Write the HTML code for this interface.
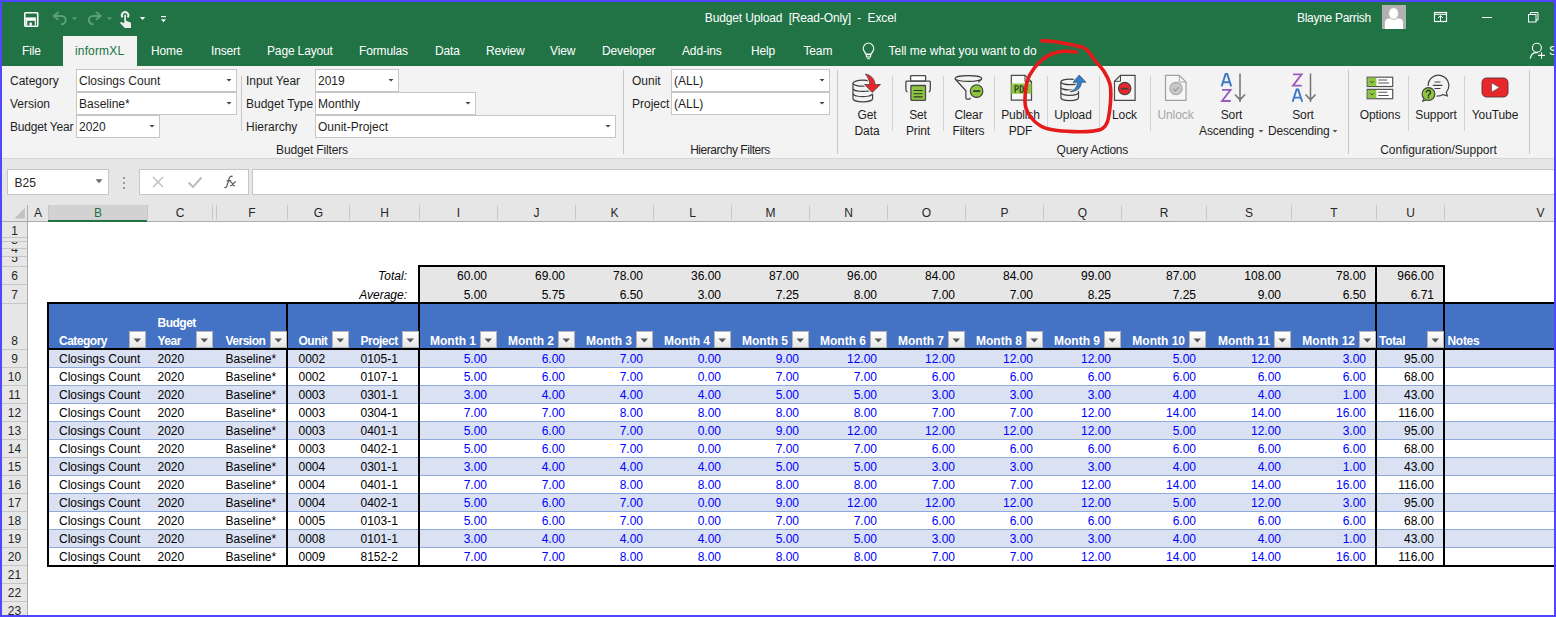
<!DOCTYPE html>
<html><head><meta charset="utf-8"><style>
html,body{margin:0;padding:0;width:1556px;height:617px;overflow:hidden;background:#fff}
body{position:relative;font-family:"Liberation Sans", sans-serif;-webkit-font-smoothing:antialiased}
body div, body svg{position:absolute;white-space:nowrap;box-sizing:content-box}
body div div{position:absolute}
</style></head><body>
<div style="left:0px;top:0px;width:1556px;height:617px;background:#ffffff;"></div>
<div style="left:2px;top:2px;width:1552px;height:64px;background:#217346;"></div>
<svg style="left:22px;top:10px;" width="18" height="18" viewBox="0 0 18 18"><rect x="2.8" y="2.8" width="12.9" height="13.4" rx="0.7" fill="none" stroke="#fff" stroke-width="1.6"/><rect x="3.6" y="7.4" width="10.3" height="3.4" fill="#fff"/><rect x="3.6" y="10.8" width="1.6" height="4.6" fill="#fff"/><rect x="12.8" y="10.8" width="1.1" height="4.6" fill="#fff"/><rect x="7.5" y="12.6" width="2.3" height="3" fill="#fff"/></svg>
<svg style="left:52px;top:10px;" width="28" height="18" viewBox="0 0 28 18"><path d="M6.5 2 L1.8 5.9 L6.5 9.8" fill="none" stroke="#5c9e7a" stroke-width="2"/><path d="M2.5 5.9 H9.5 a4.2 4.2 0 0 1 0 8.4 H9" fill="none" stroke="#5c9e7a" stroke-width="2"/><path d="M20 7.3h5l-2.5 2.6z" fill="#5c9e7a"/></svg>
<svg style="left:87px;top:10px;" width="28" height="18" viewBox="0 0 28 18"><path d="M9 2 L13.7 5.9 L9 9.8" fill="none" stroke="#5c9e7a" stroke-width="2"/><path d="M13 5.9 H6 a4.2 4.2 0 0 0 0 8.4 H6.5" fill="none" stroke="#5c9e7a" stroke-width="2"/><path d="M20 7.3h5l-2.5 2.6z" fill="#5c9e7a"/></svg>
<svg style="left:118px;top:9px;" width="30" height="20" viewBox="0 0 30 20"><path d="M4.6 8.3 A3.2 3.2 0 1 1 9.6 8.3" fill="none" stroke="#eee" stroke-width="1.9"/><path d="M6.3 5.8 h1.7 v6 l5 2 v5.2 h-6.2 l-5-5.2 l1.5-0.9 l3 1.4z" fill="#eee"/><path d="M22 7.9h5.2l-2.6 3.2z" fill="#fff"/></svg>
<svg style="left:158px;top:13px;" width="10" height="12" viewBox="0 0 10 12"><rect x="3" y="3" width="5" height="1.2" fill="#fff"/><path d="M3 6.2h5l-2.5 3z" fill="#fff"/></svg>
<div style="top:12.03px;font-size:12px;line-height:12px;color:#ffffff;left:500.5px;width:600px;text-align:center;letter-spacing:-0.15px;">Budget Upload &nbsp;[Read-Only] &nbsp;- &nbsp;Excel</div>
<div style="top:12.03px;font-size:12px;line-height:12px;color:#ffffff;left:1297px;letter-spacing:-0.3px;">Blayne Parrish</div>
<svg style="left:1382px;top:5px;" width="24" height="24" viewBox="0 0 24 24"><rect width="24" height="24" fill="#b1b1b1"/><path d="M2.9 24 V17.8 Q2.9 13.4 7.3 13.4 H16.6 Q21 13.4 21 17.8 V24z" fill="#fff"/><ellipse cx="11.6" cy="8.5" rx="5" ry="5.9" fill="#fff" stroke="#b1b1b1" stroke-width="0.9"/></svg>
<svg style="left:1432px;top:10px;" width="18" height="14" viewBox="0 0 18 14"><rect x="2.5" y="2.5" width="12" height="9" fill="none" stroke="#fff" stroke-width="1.2"/><path d="M2.5 4.3h12" stroke="#fff" stroke-width="1"/><path d="M8.5 11.5V5.8 M6 8 l2.5-2.3 l2.5 2.3" fill="none" stroke="#fff" stroke-width="1"/></svg>
<div style="left:1482px;top:17px;width:10px;height:1px;background:#ffffff;"></div>
<svg style="left:1526px;top:10px;" width="16" height="16" viewBox="0 0 16 16"><rect x="2.5" y="4.5" width="7.5" height="7.5" fill="none" stroke="#fff" stroke-width="1"/><path d="M4.5 4.5V2.5h7.5V10h-2" fill="none" stroke="#fff" stroke-width="1"/></svg>
<div style="left:63px;top:36px;width:74px;height:30px;background:#f3f3f3;"></div>
<div style="top:45.03px;font-size:12px;line-height:12px;color:#ffffff;left:22px;letter-spacing:-0.15px;">File</div>
<div style="top:45.03px;font-size:12px;line-height:12px;color:#217346;left:75px;letter-spacing:0.15px;">informXL</div>
<div style="top:45.03px;font-size:12px;line-height:12px;color:#ffffff;left:151px;letter-spacing:-0.15px;">Home</div>
<div style="top:45.03px;font-size:12px;line-height:12px;color:#ffffff;left:211px;letter-spacing:-0.15px;">Insert</div>
<div style="top:45.03px;font-size:12px;line-height:12px;color:#ffffff;left:267px;letter-spacing:-0.15px;">Page Layout</div>
<div style="top:45.03px;font-size:12px;line-height:12px;color:#ffffff;left:359px;letter-spacing:-0.15px;">Formulas</div>
<div style="top:45.03px;font-size:12px;line-height:12px;color:#ffffff;left:435px;letter-spacing:-0.15px;">Data</div>
<div style="top:45.03px;font-size:12px;line-height:12px;color:#ffffff;left:486px;letter-spacing:-0.15px;">Review</div>
<div style="top:45.03px;font-size:12px;line-height:12px;color:#ffffff;left:550px;letter-spacing:-0.15px;">View</div>
<div style="top:45.03px;font-size:12px;line-height:12px;color:#ffffff;left:602px;letter-spacing:-0.15px;">Developer</div>
<div style="top:45.03px;font-size:12px;line-height:12px;color:#ffffff;left:682px;letter-spacing:-0.15px;">Add-ins</div>
<div style="top:45.03px;font-size:12px;line-height:12px;color:#ffffff;left:751px;letter-spacing:-0.15px;">Help</div>
<div style="top:45.03px;font-size:12px;line-height:12px;color:#ffffff;left:803.5px;letter-spacing:-0.15px;">Team</div>
<svg style="left:861px;top:41px;" width="16" height="20" viewBox="0 0 16 20"><path d="M4.9 13.2 L3.4 10.6 A5.2 5.2 0 1 1 11.6 10.6 L10.1 13.2z" fill="none" stroke="#fff" stroke-width="1.2" stroke-linejoin="round"/><rect x="5.4" y="13.6" width="4.2" height="2.3" fill="none" stroke="#fff" stroke-width="1.1"/><rect x="6.2" y="17.2" width="2.8" height="1" fill="#fff"/></svg>
<div style="top:45.03px;font-size:12px;line-height:12px;color:#ffffff;left:888.5px;">Tell me what you want to do</div>
<svg style="left:1528px;top:41px;" width="18" height="18" viewBox="0 0 18 18"><circle cx="8.9" cy="6.7" r="4.5" fill="none" stroke="#fff" stroke-width="1.1"/><path d="M2.3 17.6 C2.8 13.8 5 11.8 8 11.6 H10" fill="none" stroke="#fff" stroke-width="1.1"/><path d="M13.5 11.3v6.5 M10.1 14.4h6.8" stroke="#fff" stroke-width="1.1"/></svg>
<div style="top:45.03px;font-size:12px;line-height:12px;color:#ffffff;left:1549px;">S</div>
<div style="left:2px;top:66px;width:1552px;height:92px;background:#f3f3f3;"></div>
<div style="left:2px;top:158px;width:1552px;height:1px;background:#d5d5d5;"></div>
<div style="top:75.03px;font-size:12px;line-height:12px;color:#1f1f1f;left:10px;">Category</div>
<div style="top:98.03px;font-size:12px;line-height:12px;color:#1f1f1f;left:10px;">Version</div>
<div style="top:121.03px;font-size:12px;line-height:12px;color:#1f1f1f;left:10px;letter-spacing:-0.2px;">Budget Year</div>
<div style="left:76px;top:69px;width:159px;height:21px;background:#fff;border:1px solid #c6c6c6"></div>
<svg style="left:225px;top:77px;" width="8" height="6" viewBox="0 0 8 6"><path d="M1.5 2h5l-2.5 2.6z" fill="#444"/></svg>
<div style="top:75.03px;font-size:12px;line-height:12px;color:#1f1f1f;left:79px;">Closings Count</div>
<div style="left:76px;top:92px;width:159px;height:21px;background:#fff;border:1px solid #c6c6c6"></div>
<svg style="left:225px;top:100px;" width="8" height="6" viewBox="0 0 8 6"><path d="M1.5 2h5l-2.5 2.6z" fill="#444"/></svg>
<div style="top:98.03px;font-size:12px;line-height:12px;color:#1f1f1f;left:79px;">Baseline*</div>
<div style="left:76px;top:115px;width:82px;height:21px;background:#fff;border:1px solid #c6c6c6"></div>
<svg style="left:148px;top:123px;" width="8" height="6" viewBox="0 0 8 6"><path d="M1.5 2h5l-2.5 2.6z" fill="#444"/></svg>
<div style="top:121.03px;font-size:12px;line-height:12px;color:#1f1f1f;left:79px;">2020</div>
<div style="left:241px;top:76px;width:1px;height:55px;background:#c8c8c8;"></div>
<div style="top:75.03px;font-size:12px;line-height:12px;color:#1f1f1f;left:246px;">Input Year</div>
<div style="top:98.03px;font-size:12px;line-height:12px;color:#1f1f1f;left:246px;">Budget Type</div>
<div style="top:121.03px;font-size:12px;line-height:12px;color:#1f1f1f;left:246px;">Hierarchy</div>
<div style="left:315px;top:69px;width:82px;height:21px;background:#fff;border:1px solid #c6c6c6"></div>
<svg style="left:387px;top:77px;" width="8" height="6" viewBox="0 0 8 6"><path d="M1.5 2h5l-2.5 2.6z" fill="#444"/></svg>
<div style="top:75.03px;font-size:12px;line-height:12px;color:#1f1f1f;left:318px;">2019</div>
<div style="left:315px;top:92px;width:159px;height:21px;background:#fff;border:1px solid #c6c6c6"></div>
<svg style="left:464px;top:100px;" width="8" height="6" viewBox="0 0 8 6"><path d="M1.5 2h5l-2.5 2.6z" fill="#444"/></svg>
<div style="top:98.03px;font-size:12px;line-height:12px;color:#1f1f1f;left:318px;">Monthly</div>
<div style="left:315px;top:115px;width:299px;height:21px;background:#fff;border:1px solid #c6c6c6"></div>
<svg style="left:604px;top:123px;" width="8" height="6" viewBox="0 0 8 6"><path d="M1.5 2h5l-2.5 2.6z" fill="#444"/></svg>
<div style="top:121.03px;font-size:12px;line-height:12px;color:#1f1f1f;left:318px;">Ounit-Project</div>
<div style="top:144.03px;font-size:12px;line-height:12px;color:#1f1f1f;left:12px;width:600px;text-align:center;letter-spacing:-0.15px;">Budget Filters</div>
<div style="left:623px;top:70px;width:1px;height:84px;background:#c8c8c8;"></div>
<div style="top:75.03px;font-size:12px;line-height:12px;color:#1f1f1f;left:632px;">Ounit</div>
<div style="top:98.03px;font-size:12px;line-height:12px;color:#1f1f1f;left:632px;">Project</div>
<div style="left:671px;top:69px;width:157px;height:21px;background:#fff;border:1px solid #c6c6c6"></div>
<svg style="left:818px;top:77px;" width="8" height="6" viewBox="0 0 8 6"><path d="M1.5 2h5l-2.5 2.6z" fill="#444"/></svg>
<div style="top:75.03px;font-size:12px;line-height:12px;color:#1f1f1f;left:674px;">(ALL)</div>
<div style="left:671px;top:92px;width:157px;height:21px;background:#fff;border:1px solid #c6c6c6"></div>
<svg style="left:818px;top:100px;" width="8" height="6" viewBox="0 0 8 6"><path d="M1.5 2h5l-2.5 2.6z" fill="#444"/></svg>
<div style="top:98.03px;font-size:12px;line-height:12px;color:#1f1f1f;left:674px;">(ALL)</div>
<div style="top:144.03px;font-size:12px;line-height:12px;color:#1f1f1f;left:430px;width:600px;text-align:center;letter-spacing:-0.45px;">Hierarchy Filters</div>
<div style="left:837px;top:70px;width:1px;height:84px;background:#c8c8c8;"></div>
<div style="left:892px;top:76px;width:1px;height:55px;background:#d2d2d2;"></div>
<div style="left:943px;top:76px;width:1px;height:55px;background:#d2d2d2;"></div>
<div style="left:994px;top:76px;width:1px;height:55px;background:#d2d2d2;"></div>
<div style="left:1047px;top:76px;width:1px;height:55px;background:#d2d2d2;"></div>
<div style="left:1099px;top:76px;width:1px;height:55px;background:#d2d2d2;"></div>
<div style="left:1150px;top:76px;width:1px;height:55px;background:#d2d2d2;"></div>
<div style="left:1408px;top:76px;width:1px;height:55px;background:#d2d2d2;"></div>
<div style="left:1464px;top:76px;width:1px;height:55px;background:#d2d2d2;"></div>
<div style="left:1348px;top:70px;width:1px;height:84px;background:#c8c8c8;"></div>
<div style="left:1529px;top:70px;width:1px;height:84px;background:#c8c8c8;"></div>
<div style="top:144.03px;font-size:12px;line-height:12px;color:#1f1f1f;left:792.3px;width:600px;text-align:center;letter-spacing:-0.25px;">Query Actions</div>
<div style="top:144.03px;font-size:12px;line-height:12px;color:#1f1f1f;left:1138.5px;width:600px;text-align:center;">Configuration/Support</div>
<div style="top:109.03px;font-size:12px;line-height:12px;color:#1f1f1f;left:567px;width:600px;text-align:center;letter-spacing:-0.1px;">Get</div>
<div style="top:125.03px;font-size:12px;line-height:12px;color:#1f1f1f;left:567px;width:600px;text-align:center;letter-spacing:-0.1px;">Data</div>
<div style="top:109.03px;font-size:12px;line-height:12px;color:#1f1f1f;left:618px;width:600px;text-align:center;letter-spacing:-0.1px;">Set</div>
<div style="top:125.03px;font-size:12px;line-height:12px;color:#1f1f1f;left:618px;width:600px;text-align:center;letter-spacing:-0.1px;">Print</div>
<div style="top:109.03px;font-size:12px;line-height:12px;color:#1f1f1f;left:668.5px;width:600px;text-align:center;letter-spacing:-0.1px;">Clear</div>
<div style="top:125.03px;font-size:12px;line-height:12px;color:#1f1f1f;left:668.5px;width:600px;text-align:center;letter-spacing:-0.1px;">Filters</div>
<div style="top:109.03px;font-size:12px;line-height:12px;color:#1f1f1f;left:720.5px;width:600px;text-align:center;letter-spacing:-0.1px;">Publish</div>
<div style="top:125.03px;font-size:12px;line-height:12px;color:#1f1f1f;left:720.5px;width:600px;text-align:center;letter-spacing:-0.1px;">PDF</div>
<div style="top:109.03px;font-size:12px;line-height:12px;color:#1f1f1f;left:773px;width:600px;text-align:center;letter-spacing:-0.1px;">Upload</div>
<div style="top:109.03px;font-size:12px;line-height:12px;color:#1f1f1f;left:824.5px;width:600px;text-align:center;letter-spacing:-0.1px;">Lock</div>
<div style="top:109.03px;font-size:12px;line-height:12px;color:#a6a6a6;left:875.5px;width:600px;text-align:center;letter-spacing:-0.1px;">Unlock</div>
<div style="top:109.03px;font-size:12px;line-height:12px;color:#1f1f1f;left:931.5px;width:600px;text-align:center;letter-spacing:-0.1px;">Sort</div>
<div style="top:109.03px;font-size:12px;line-height:12px;color:#1f1f1f;left:1003px;width:600px;text-align:center;letter-spacing:-0.1px;">Sort</div>
<div style="top:109.03px;font-size:12px;line-height:12px;color:#1f1f1f;left:1080px;width:600px;text-align:center;letter-spacing:-0.1px;">Options</div>
<div style="top:109.03px;font-size:12px;line-height:12px;color:#1f1f1f;left:1136px;width:600px;text-align:center;letter-spacing:-0.1px;">Support</div>
<div style="top:109.03px;font-size:12px;line-height:12px;color:#1f1f1f;left:1195px;width:600px;text-align:center;letter-spacing:-0.1px;">YouTube</div>
<div style="top:125.03px;font-size:12px;line-height:12px;color:#1f1f1f;left:1199px;letter-spacing:-0.1px;">Ascending</div>
<svg style="left:1257px;top:128px;" width="8" height="6" viewBox="0 0 8 6"><path d="M1.5 2h5l-2.5 2.6z" fill="#555"/></svg>
<div style="top:125.03px;font-size:12px;line-height:12px;color:#1f1f1f;left:1268px;letter-spacing:-0.2px;">Descending</div>
<svg style="left:1331px;top:128px;" width="8" height="6" viewBox="0 0 8 6"><path d="M1.5 2h5l-2.5 2.6z" fill="#555"/></svg>
<svg style="left:850px;top:72px;" width="34" height="32" viewBox="0 0 34 32"><g fill="#f3f3f3" stroke="#404040" stroke-width="1.2"><path d="M3.0 21.6 v5.2 a9.8 3.0 0 0 0 19.6 0 v-5.2"/><path d="M3.0 16.4 v5.2 a9.8 3.0 0 0 0 19.6 0 v-5.2"/><path d="M3.0 11.2 v5.2 a9.8 3.0 0 0 0 19.6 0 v-5.2"/><ellipse cx="12.8" cy="11.2" rx="9.8" ry="3.0"/></g>
<path d="M15.3 2 c6 1 9.5 5.5 9.8 10.5 h5.4 l-8.3 8 l-7.6-8 h5.3 c-0.3-4 -2-7.5 -4.6-10.5z" fill="none" stroke="#f3f3f3" stroke-width="2.6"/><path d="M15.3 2 c6 1 9.5 5.5 9.8 10.5 h5.4 l-8.3 8 l-7.6-8 h5.3 c-0.3-4 -2-7.5 -4.6-10.5z" fill="#e8262b" stroke="#3a3a3a" stroke-width="0.7" stroke-linejoin="round"/>
</svg>
<svg style="left:903px;top:73px;" width="30" height="30" viewBox="0 0 30 30">
<rect x="7.6" y="2.6" width="15" height="5.6" rx="0.8" fill="#fff" stroke="#4a4a4a" stroke-width="1.3"/>
<path d="M4.5 19 c-1.2-0.5 -1.6-1.3 -1.6-2.5 v-7.6 c0-0.5 0.3-0.8 0.8-0.8 h22.8 c0.5 0 0.8 0.3 0.8 0.8 v7.6 c0 1.2 -0.4 2 -1.6 2.5" fill="none" stroke="#4a4a4a" stroke-width="1.3"/>
<rect x="7.9" y="12.5" width="14.6" height="14.8" rx="0.5" fill="#8cc63f" stroke="#4a4a4a" stroke-width="1.3"/>
<path d="M10.6 17.5h9 M10.6 20.7h9 M10.6 23.9h9" stroke="#333" stroke-width="1.1"/>
</svg>
<svg style="left:953px;top:73px;" width="32" height="30" viewBox="0 0 32 30">
<path d="M2.2 6 L12.9 17.8 v7.2 c0 0.8 0.4 1.2 1.2 1.2 h2.2 c0.6 0 1-0.3 1-1.4" fill="none" stroke="#3a3a3a" stroke-width="1.2"/>
<path d="M28.8 5.7 L25.4 9.4" fill="none" stroke="#3a3a3a" stroke-width="1.2"/>
<ellipse cx="15.4" cy="5.5" rx="13.4" ry="2.9" fill="#f3f3f3" stroke="#3a3a3a" stroke-width="1.1"/>
<circle cx="23.6" cy="18.1" r="6.3" fill="#8cc63f" stroke="#3a3a3a" stroke-width="1.1"/>
<rect x="20.2" y="17.2" width="6.9" height="1.8" fill="#3a3a3a"/>
</svg>
<svg style="left:1010px;top:74px;" width="24" height="28" viewBox="0 0 24 28">
<path d="M1.3 1.3 h13.7 l6.5 6.5 v18.3 h-20.2z" fill="#f8f8f8" stroke="#4a4a4a" stroke-width="1.2"/>
<path d="M15 1.3 v6.5 h6.5" fill="none" stroke="#404040" stroke-width="1"/>
<rect x="1.3" y="9.5" width="20.2" height="10.2" fill="#8cc63f"/>
<path d="M5.2 18.7 V11.8 H6.6 a1.8 1.8 0 0 1 0 3.6 H5.2 M10.3 18.2 V11.8 H11.3 c1.6 0 2.1 1.2 2.1 3.2 s-0.5 3.2 -2.1 3.2z M15.4 18.7 V11.8 H18.2 M15.4 15.2 H17.6" fill="none" stroke="#333" stroke-width="1.1"/>
</svg>
<svg style="left:1058px;top:73px;" width="30" height="30" viewBox="0 0 30 30"><g fill="#f3f3f3" stroke="#404040" stroke-width="1.2"><path d="M2.8999999999999986 19.5 v5.3 a8.8 2.8 0 0 0 17.6 0 v-5.3"/><path d="M2.8999999999999986 14.2 v5.3 a8.8 2.8 0 0 0 17.6 0 v-5.3"/><path d="M2.8999999999999986 8.9 v5.3 a8.8 2.8 0 0 0 17.6 0 v-5.3"/><ellipse cx="11.7" cy="8.9" rx="8.8" ry="2.8"/></g>
<path d="M12 18.8 c4.5-1.5 7-4.5 7.5-9.5 h-4.5 l6.2-7.3 l6.8 7.3 h-4.5 c-0.5 6 -4.5 9.5 -11.5 9.5z" fill="none" stroke="#f3f3f3" stroke-width="2.6"/><path d="M12 18.8 c4.5-1.5 7-4.5 7.5-9.5 h-4.5 l6.2-7.3 l6.8 7.3 h-4.5 c-0.5 6 -4.5 9.5 -11.5 9.5z" fill="#2f7fd0" stroke="#3a3a3a" stroke-width="0.6" stroke-linejoin="round"/>
</svg>
<svg style="left:1113px;top:74px;" width="24" height="28" viewBox="0 0 24 28">
<path d="M7.5 1.3 h14.6 v25 h-20.6 v-19z" fill="#f6f6f6" stroke="#4a4a4a" stroke-width="1.2"/>
<path d="M7.5 1.3 v6 h-6" fill="none" stroke="#404040" stroke-width="1"/>
<circle cx="11.7" cy="14.6" r="6.2" fill="#e8262b" stroke="#404040" stroke-width="1.1"/>
<rect x="8" y="13.8" width="7.4" height="1.7" fill="#404040"/>
</svg>
<svg style="left:1164px;top:74px;" width="24" height="28" viewBox="0 0 24 28">
<path d="M1.5 1.3 h13.8 l6.7 6.7 v18.3 h-20.5z" fill="#f6f6f6" stroke="#a0a0a0" stroke-width="1.2"/>
<path d="M15.3 1.3 v6.7 h6.7" fill="none" stroke="#a8a8a8" stroke-width="1"/>
<circle cx="12" cy="14.6" r="6.2" fill="#c8c8c8" stroke="#a8a8a8" stroke-width="1.1"/>
<path d="M9.2 14.8 l2 2 l3.6-3.6" fill="none" stroke="#9a9a9a" stroke-width="1.2"/>
</svg>
<svg style="left:1219px;top:72px;" width="28" height="32" viewBox="0 0 28 32"><path d="M2.6 14.4 L6.6 2.0 h1.6 L12.2 14.4 M4.2 10.200000000000001 h6.4" fill="none" stroke="#3a78c2" stroke-width="1.9"/><path d="M3 17.8 h8.6 L3 29.0 h8.8" fill="none" stroke="#9b5bbb" stroke-width="1.8"/><path d="M21 1.5 v28.5 M16 22.5 l5 5.3 l5-5.3" fill="none" stroke="#737373" stroke-width="1.5"/></svg>
<svg style="left:1289.5px;top:72px;" width="28" height="32" viewBox="0 0 28 32"><path d="M3 2.4 h8.6 L3 13.6 h8.8" fill="none" stroke="#9b5bbb" stroke-width="1.8"/><path d="M2.6 29.8 L6.6 17.400000000000002 h1.6 L12.2 29.8 M4.2 25.6 h6.4" fill="none" stroke="#3a78c2" stroke-width="1.9"/><path d="M20.5 1.5 v28.5 M15.5 22.5 l5 5.3 l5-5.3" fill="none" stroke="#737373" stroke-width="1.5"/></svg>
<svg style="left:1366px;top:76px;" width="28" height="24" viewBox="0 0 28 24">
<rect x="1.2" y="1.2" width="25.5" height="9.3" fill="#fff" stroke="#555" stroke-width="1.2"/>
<rect x="1.8" y="1.8" width="8.6" height="8.1" fill="#8cc63f"/>
<path d="M4.3 5 l1.8 1.8 l1.8-1.8" fill="none" stroke="#404040" stroke-width="1"/>
<path d="M12.2 4h9 M12.2 7h11" stroke="#555" stroke-width="1.1"/>
<rect x="1.2" y="13.4" width="25.5" height="9.3" fill="#fff" stroke="#555" stroke-width="1.2"/>
<rect x="1.8" y="14" width="8.6" height="8.1" fill="#8cc63f"/>
<path d="M4.3 17.2 l1.8 1.8 l1.8-1.8" fill="none" stroke="#404040" stroke-width="1"/>
<path d="M12.2 16.3h9 M12.2 19.5h10.5" stroke="#555" stroke-width="1.1"/>
</svg>
<svg style="left:1420px;top:73px;" width="30" height="30" viewBox="0 0 30 30">
<path d="M8.2 13 A10.3 10.3 0 1 1 26.3 19.3 l1 3.6 l-4.2-1.3 c-1.5 1-4 1.6-6.5 1.6" fill="none" stroke="#404040" stroke-width="1.2"/>
<path d="M14.5 9h6 M12.8 12.3h9.6 M14.5 15.5h6" stroke="#404040" stroke-width="1.2"/>
<circle cx="8.5" cy="21" r="6.4" fill="#8cc63f" stroke="#404040" stroke-width="1.1"/>
<path d="M3.8 25.5 l-1.3 3 l3.3-1.3" fill="#8cc63f" stroke="#404040" stroke-width="1"/>
<path d="M6.3 19.4 a2.1 2.1 0 1 1 3.1 1.8 c-0.7 0.4 -1 0.8 -1 1.5 v0.6" fill="none" stroke="#2a2a2a" stroke-width="1.3"/>
<rect x="7.7" y="23.8" width="1.4" height="1.3" fill="#2a2a2a"/>
</svg>
<svg style="left:1481px;top:77px;" width="28" height="21" viewBox="0 0 28 21">
<rect x="1" y="1" width="26" height="19" rx="4.5" fill="#e8262b" stroke="#5a3030" stroke-width="0.9"/>
<path d="M10.5 5.8 v9.4 l8-4.7z" fill="#fff" stroke="#404040" stroke-width="0.6"/>
</svg>
<div style="left:2px;top:159px;width:1552px;height:46px;background:#e6e6e6;"></div>
<div style="left:7px;top:169px;width:100px;height:24px;background:#fff;border:1px solid #c6c6c6"></div>
<div style="top:177.03px;font-size:12px;line-height:12px;color:#262626;left:14.5px;">B25</div>
<svg style="left:94px;top:177px;" width="10" height="8" viewBox="0 0 10 8"><path d="M1.5 2.2h7l-3.5 4z" fill="#6a6a6a"/></svg>
<div style="left:123px;top:177px;width:2px;height:2px;background:#9a9a9a;"></div>
<div style="left:123px;top:182px;width:2px;height:2px;background:#9a9a9a;"></div>
<div style="left:123px;top:187px;width:2px;height:2px;background:#9a9a9a;"></div>
<div style="left:139px;top:169px;width:108px;height:24px;background:#fff;border:1px solid #c6c6c6"></div>
<svg style="left:151px;top:175px;" width="14" height="14" viewBox="0 0 14 14"><path d="M2 2 L12 12 M12 2 L2 12" stroke="#bdbdbd" stroke-width="1.4"/></svg>
<svg style="left:187px;top:175px;" width="16" height="14" viewBox="0 0 16 14"><path d="M1.5 7.5 l4.5 4.5 l8.5-9.5" fill="none" stroke="#bfbfbf" stroke-width="2.2"/></svg>
<svg style="left:223px;top:175px;" width="16" height="14" viewBox="0 0 16 14"><path d="M1.4 12.4 c1 0.5 1.9 0 2.5-1.5 L6.3 3.1 c0.5-1.5 1.6-2.2 3.3-1.6 M3.6 5.6 h4.6" fill="none" stroke="#606060" stroke-width="1.35"/><path d="M6.6 6.9 c1.5-0.3 2.3 0.5 2.8 1.8 l0.7 1.5 c0.4 0.6 1 0.6 1.7 0.3 M12.8 6.6 c-0.8 0 -1.8 1.2 -2.6 2.2 l-1.2 1.4 c-0.6 0.6 -1.2 0.6 -1.9 0.3" fill="none" stroke="#606060" stroke-width="1.2"/></svg>
<div style="left:252px;top:169px;width:1310px;height:24px;background:#fff;border:1px solid #c6c6c6"></div>
<div style="left:2px;top:205px;width:1552px;height:16px;background:#e6e6e6;"></div>
<div style="left:48px;top:205px;width:99px;height:16px;background:#d2d2d2;"></div>
<div style="left:2px;top:221px;width:1552px;height:1px;background:#ababab;"></div>
<div style="left:48px;top:220px;width:99px;height:2px;background:#217346;"></div>
<svg style="left:13px;top:207px;" width="14" height="13" viewBox="0 0 14 13"><path d="M12 1 V11.5 H1.5z" fill="#c2c2c2"/></svg>
<div style="left:48px;top:205px;width:1px;height:15px;background:#c8c8c8;"></div>
<div style="top:207.03px;font-size:12px;line-height:12px;color:#262626;left:-262.0px;width:600px;text-align:center;">A</div>
<div style="left:147px;top:205px;width:1px;height:15px;background:#c8c8c8;"></div>
<div style="top:207.03px;font-size:12px;line-height:12px;color:#217346;left:-202.0px;width:600px;text-align:center;">B</div>
<div style="left:212px;top:205px;width:1px;height:15px;background:#c8c8c8;"></div>
<div style="top:207.03px;font-size:12px;line-height:12px;color:#262626;left:-120.0px;width:600px;text-align:center;">C</div>
<div style="left:287px;top:205px;width:1px;height:15px;background:#c8c8c8;"></div>
<div style="top:207.03px;font-size:12px;line-height:12px;color:#262626;left:-48.0px;width:600px;text-align:center;">F</div>
<div style="left:349px;top:205px;width:1px;height:15px;background:#c8c8c8;"></div>
<div style="top:207.03px;font-size:12px;line-height:12px;color:#262626;left:18.5px;width:600px;text-align:center;">G</div>
<div style="left:419px;top:205px;width:1px;height:15px;background:#c8c8c8;"></div>
<div style="top:207.03px;font-size:12px;line-height:12px;color:#262626;left:84.5px;width:600px;text-align:center;">H</div>
<div style="left:497px;top:205px;width:1px;height:15px;background:#c8c8c8;"></div>
<div style="top:207.03px;font-size:12px;line-height:12px;color:#262626;left:158.5px;width:600px;text-align:center;">I</div>
<div style="left:575px;top:205px;width:1px;height:15px;background:#c8c8c8;"></div>
<div style="top:207.03px;font-size:12px;line-height:12px;color:#262626;left:236.5px;width:600px;text-align:center;">J</div>
<div style="left:653px;top:205px;width:1px;height:15px;background:#c8c8c8;"></div>
<div style="top:207.03px;font-size:12px;line-height:12px;color:#262626;left:314.5px;width:600px;text-align:center;">K</div>
<div style="left:731px;top:205px;width:1px;height:15px;background:#c8c8c8;"></div>
<div style="top:207.03px;font-size:12px;line-height:12px;color:#262626;left:392.5px;width:600px;text-align:center;">L</div>
<div style="left:809px;top:205px;width:1px;height:15px;background:#c8c8c8;"></div>
<div style="top:207.03px;font-size:12px;line-height:12px;color:#262626;left:470.5px;width:600px;text-align:center;">M</div>
<div style="left:887px;top:205px;width:1px;height:15px;background:#c8c8c8;"></div>
<div style="top:207.03px;font-size:12px;line-height:12px;color:#262626;left:548.5px;width:600px;text-align:center;">N</div>
<div style="left:965px;top:205px;width:1px;height:15px;background:#c8c8c8;"></div>
<div style="top:207.03px;font-size:12px;line-height:12px;color:#262626;left:626.5px;width:600px;text-align:center;">O</div>
<div style="left:1043px;top:205px;width:1px;height:15px;background:#c8c8c8;"></div>
<div style="top:207.03px;font-size:12px;line-height:12px;color:#262626;left:704.5px;width:600px;text-align:center;">P</div>
<div style="left:1121px;top:205px;width:1px;height:15px;background:#c8c8c8;"></div>
<div style="top:207.03px;font-size:12px;line-height:12px;color:#262626;left:782.5px;width:600px;text-align:center;">Q</div>
<div style="left:1206px;top:205px;width:1px;height:15px;background:#c8c8c8;"></div>
<div style="top:207.03px;font-size:12px;line-height:12px;color:#262626;left:864.0px;width:600px;text-align:center;">R</div>
<div style="left:1291px;top:205px;width:1px;height:15px;background:#c8c8c8;"></div>
<div style="top:207.03px;font-size:12px;line-height:12px;color:#262626;left:949.0px;width:600px;text-align:center;">S</div>
<div style="left:1376px;top:205px;width:1px;height:15px;background:#c8c8c8;"></div>
<div style="top:207.03px;font-size:12px;line-height:12px;color:#262626;left:1034.0px;width:600px;text-align:center;">T</div>
<div style="left:1444px;top:205px;width:1px;height:15px;background:#c8c8c8;"></div>
<div style="top:207.03px;font-size:12px;line-height:12px;color:#262626;left:1110.5px;width:600px;text-align:center;">U</div>
<div style="left:1636px;top:205px;width:1px;height:15px;background:#c8c8c8;"></div>
<div style="top:207.03px;font-size:12px;line-height:12px;color:#262626;left:1240.5px;width:600px;text-align:center;">V</div>
<div style="left:27px;top:205px;width:1px;height:16px;background:#ababab;"></div>
<div style="left:216px;top:205px;width:1px;height:15px;background:#c8c8c8;"></div>
<div style="left:2px;top:222px;width:25px;height:393px;background:#e6e6e6;"></div>
<div style="left:27px;top:222px;width:1px;height:393px;background:#ababab;"></div>
<div style="left:2px;top:237px;width:25px;height:1px;background:#c6c6c6;"></div>
<div style="left:2px;top:222px;width:25px;height:15px;overflow:hidden"><div style="left:0;top:3.030000000000001px;width:25px;text-align:center;font-size:12px;line-height:12px;color:#262626">1</div></div>
<div style="left:2px;top:241px;width:25px;height:1px;background:#c6c6c6;"></div>
<div style="left:2px;top:238px;width:25px;height:3px;overflow:hidden"><div style="left:0;top:4.030000000000001px;width:25px;text-align:center;font-size:12px;line-height:12px;color:#262626">2</div></div>
<div style="left:2px;top:248px;width:25px;height:1px;background:#c6c6c6;"></div>
<div style="left:2px;top:242px;width:25px;height:6px;overflow:hidden"><div style="left:0;top:-8.469999999999999px;width:25px;text-align:center;font-size:12px;line-height:12px;color:#262626">3</div></div>
<div style="left:2px;top:256px;width:25px;height:1px;background:#c6c6c6;"></div>
<div style="left:2px;top:249px;width:25px;height:7px;overflow:hidden"><div style="left:0;top:-6.1699999999999875px;width:25px;text-align:center;font-size:12px;line-height:12px;color:#262626">4</div></div>
<div style="left:2px;top:266px;width:25px;height:1px;background:#c6c6c6;"></div>
<div style="left:2px;top:257px;width:25px;height:9px;overflow:hidden"><div style="left:0;top:-4.969999999999999px;width:25px;text-align:center;font-size:12px;line-height:12px;color:#262626">5</div></div>
<div style="left:2px;top:284px;width:25px;height:1px;background:#c6c6c6;"></div>
<div style="left:2px;top:267px;width:25px;height:17px;overflow:hidden"><div style="left:0;top:2.5299999999999727px;width:25px;text-align:center;font-size:12px;line-height:12px;color:#262626">6</div></div>
<div style="left:2px;top:303px;width:25px;height:1px;background:#c6c6c6;"></div>
<div style="left:2px;top:285px;width:25px;height:18px;overflow:hidden"><div style="left:0;top:3.5299999999999727px;width:25px;text-align:center;font-size:12px;line-height:12px;color:#262626">7</div></div>
<div style="left:2px;top:349px;width:25px;height:1px;background:#c6c6c6;"></div>
<div style="left:2px;top:304px;width:25px;height:45px;overflow:hidden"><div style="left:0;top:31.029999999999973px;width:25px;text-align:center;font-size:12px;line-height:12px;color:#262626">8</div></div>
<div style="left:2px;top:367px;width:25px;height:1px;background:#c6c6c6;"></div>
<div style="left:2px;top:350px;width:25px;height:17px;overflow:hidden"><div style="left:0;top:2.5299999999999727px;width:25px;text-align:center;font-size:12px;line-height:12px;color:#262626">9</div></div>
<div style="left:2px;top:385px;width:25px;height:1px;background:#c6c6c6;"></div>
<div style="left:2px;top:368px;width:25px;height:17px;overflow:hidden"><div style="left:0;top:2.5299999999999727px;width:25px;text-align:center;font-size:12px;line-height:12px;color:#262626">10</div></div>
<div style="left:2px;top:403px;width:25px;height:1px;background:#c6c6c6;"></div>
<div style="left:2px;top:386px;width:25px;height:17px;overflow:hidden"><div style="left:0;top:2.5299999999999727px;width:25px;text-align:center;font-size:12px;line-height:12px;color:#262626">11</div></div>
<div style="left:2px;top:421px;width:25px;height:1px;background:#c6c6c6;"></div>
<div style="left:2px;top:404px;width:25px;height:17px;overflow:hidden"><div style="left:0;top:2.5299999999999727px;width:25px;text-align:center;font-size:12px;line-height:12px;color:#262626">12</div></div>
<div style="left:2px;top:439px;width:25px;height:1px;background:#c6c6c6;"></div>
<div style="left:2px;top:422px;width:25px;height:17px;overflow:hidden"><div style="left:0;top:2.5299999999999727px;width:25px;text-align:center;font-size:12px;line-height:12px;color:#262626">13</div></div>
<div style="left:2px;top:457px;width:25px;height:1px;background:#c6c6c6;"></div>
<div style="left:2px;top:440px;width:25px;height:17px;overflow:hidden"><div style="left:0;top:2.5299999999999727px;width:25px;text-align:center;font-size:12px;line-height:12px;color:#262626">14</div></div>
<div style="left:2px;top:475px;width:25px;height:1px;background:#c6c6c6;"></div>
<div style="left:2px;top:458px;width:25px;height:17px;overflow:hidden"><div style="left:0;top:2.5299999999999727px;width:25px;text-align:center;font-size:12px;line-height:12px;color:#262626">15</div></div>
<div style="left:2px;top:493px;width:25px;height:1px;background:#c6c6c6;"></div>
<div style="left:2px;top:476px;width:25px;height:17px;overflow:hidden"><div style="left:0;top:2.5299999999999727px;width:25px;text-align:center;font-size:12px;line-height:12px;color:#262626">16</div></div>
<div style="left:2px;top:511px;width:25px;height:1px;background:#c6c6c6;"></div>
<div style="left:2px;top:494px;width:25px;height:17px;overflow:hidden"><div style="left:0;top:2.5299999999999727px;width:25px;text-align:center;font-size:12px;line-height:12px;color:#262626">17</div></div>
<div style="left:2px;top:529px;width:25px;height:1px;background:#c6c6c6;"></div>
<div style="left:2px;top:512px;width:25px;height:17px;overflow:hidden"><div style="left:0;top:2.5299999999999727px;width:25px;text-align:center;font-size:12px;line-height:12px;color:#262626">18</div></div>
<div style="left:2px;top:547px;width:25px;height:1px;background:#c6c6c6;"></div>
<div style="left:2px;top:530px;width:25px;height:17px;overflow:hidden"><div style="left:0;top:2.5299999999999727px;width:25px;text-align:center;font-size:12px;line-height:12px;color:#262626">19</div></div>
<div style="left:2px;top:565px;width:25px;height:1px;background:#c6c6c6;"></div>
<div style="left:2px;top:548px;width:25px;height:17px;overflow:hidden"><div style="left:0;top:2.5299999999999727px;width:25px;text-align:center;font-size:12px;line-height:12px;color:#262626">20</div></div>
<div style="left:2px;top:583px;width:25px;height:1px;background:#c6c6c6;"></div>
<div style="left:2px;top:566px;width:25px;height:17px;overflow:hidden"><div style="left:0;top:2.5299999999999727px;width:25px;text-align:center;font-size:12px;line-height:12px;color:#262626">21</div></div>
<div style="left:2px;top:601px;width:25px;height:1px;background:#c6c6c6;"></div>
<div style="left:2px;top:584px;width:25px;height:17px;overflow:hidden"><div style="left:0;top:2.5299999999999727px;width:25px;text-align:center;font-size:12px;line-height:12px;color:#262626">22</div></div>
<div style="left:2px;top:619px;width:25px;height:1px;background:#c6c6c6;"></div>
<div style="left:2px;top:602px;width:25px;height:17px;overflow:hidden"><div style="left:0;top:2.5299999999999727px;width:25px;text-align:center;font-size:12px;line-height:12px;color:#262626">23</div></div>
<div style="left:418px;top:265px;width:1027px;height:39px;background:#000;"></div>
<div style="left:420px;top:267px;width:955px;height:35px;background:#e7e6e6;"></div>
<div style="left:1377px;top:267px;width:66px;height:35px;background:#e7e6e6;"></div>
<div style="top:270.03px;font-size:12px;line-height:12px;color:#000;font-style:italic;left:7px;width:400px;text-align:right;">Total:</div>
<div style="top:289.03px;font-size:12px;line-height:12px;color:#000;font-style:italic;left:7px;width:400px;text-align:right;">Average:</div>
<div style="top:270.03px;font-size:12px;line-height:12px;color:#000;left:87px;width:400px;text-align:right;">60.00</div>
<div style="top:289.03px;font-size:12px;line-height:12px;color:#000;left:87px;width:400px;text-align:right;">5.00</div>
<div style="top:270.03px;font-size:12px;line-height:12px;color:#000;left:165px;width:400px;text-align:right;">69.00</div>
<div style="top:289.03px;font-size:12px;line-height:12px;color:#000;left:165px;width:400px;text-align:right;">5.75</div>
<div style="top:270.03px;font-size:12px;line-height:12px;color:#000;left:243px;width:400px;text-align:right;">78.00</div>
<div style="top:289.03px;font-size:12px;line-height:12px;color:#000;left:243px;width:400px;text-align:right;">6.50</div>
<div style="top:270.03px;font-size:12px;line-height:12px;color:#000;left:321px;width:400px;text-align:right;">36.00</div>
<div style="top:289.03px;font-size:12px;line-height:12px;color:#000;left:321px;width:400px;text-align:right;">3.00</div>
<div style="top:270.03px;font-size:12px;line-height:12px;color:#000;left:399px;width:400px;text-align:right;">87.00</div>
<div style="top:289.03px;font-size:12px;line-height:12px;color:#000;left:399px;width:400px;text-align:right;">7.25</div>
<div style="top:270.03px;font-size:12px;line-height:12px;color:#000;left:477px;width:400px;text-align:right;">96.00</div>
<div style="top:289.03px;font-size:12px;line-height:12px;color:#000;left:477px;width:400px;text-align:right;">8.00</div>
<div style="top:270.03px;font-size:12px;line-height:12px;color:#000;left:555px;width:400px;text-align:right;">84.00</div>
<div style="top:289.03px;font-size:12px;line-height:12px;color:#000;left:555px;width:400px;text-align:right;">7.00</div>
<div style="top:270.03px;font-size:12px;line-height:12px;color:#000;left:633px;width:400px;text-align:right;">84.00</div>
<div style="top:289.03px;font-size:12px;line-height:12px;color:#000;left:633px;width:400px;text-align:right;">7.00</div>
<div style="top:270.03px;font-size:12px;line-height:12px;color:#000;left:711px;width:400px;text-align:right;">99.00</div>
<div style="top:289.03px;font-size:12px;line-height:12px;color:#000;left:711px;width:400px;text-align:right;">8.25</div>
<div style="top:270.03px;font-size:12px;line-height:12px;color:#000;left:796px;width:400px;text-align:right;">87.00</div>
<div style="top:289.03px;font-size:12px;line-height:12px;color:#000;left:796px;width:400px;text-align:right;">7.25</div>
<div style="top:270.03px;font-size:12px;line-height:12px;color:#000;left:881px;width:400px;text-align:right;">108.00</div>
<div style="top:289.03px;font-size:12px;line-height:12px;color:#000;left:881px;width:400px;text-align:right;">9.00</div>
<div style="top:270.03px;font-size:12px;line-height:12px;color:#000;left:966px;width:400px;text-align:right;">78.00</div>
<div style="top:289.03px;font-size:12px;line-height:12px;color:#000;left:966px;width:400px;text-align:right;">6.50</div>
<div style="top:270.03px;font-size:12px;line-height:12px;color:#000;left:1034px;width:400px;text-align:right;">966.00</div>
<div style="top:289.03px;font-size:12px;line-height:12px;color:#000;left:1034px;width:400px;text-align:right;">6.71</div>
<div style="left:49px;top:304px;width:1505px;height:44px;background:#4472c4;"></div>
<div style="left:49px;top:350px;width:1505px;height:17px;background:#d9e1f2;"></div>
<div style="left:49px;top:367px;width:1505px;height:1px;background:#8ea9db;"></div>
<div style="top:353.03px;font-size:12px;line-height:12px;color:#000;left:59px;">Closings Count</div>
<div style="top:353.03px;font-size:12px;line-height:12px;color:#000;left:157.5px;">2020</div>
<div style="top:353.03px;font-size:12px;line-height:12px;color:#000;left:225.5px;">Baseline*</div>
<div style="top:353.03px;font-size:12px;line-height:12px;color:#000;left:298.5px;">0002</div>
<div style="top:353.03px;font-size:12px;line-height:12px;color:#000;left:360.5px;">0105-1</div>
<div style="top:353.03px;font-size:12px;line-height:12px;color:#0000ff;left:87px;width:400px;text-align:right;">5.00</div>
<div style="top:353.03px;font-size:12px;line-height:12px;color:#0000ff;left:165px;width:400px;text-align:right;">6.00</div>
<div style="top:353.03px;font-size:12px;line-height:12px;color:#0000ff;left:243px;width:400px;text-align:right;">7.00</div>
<div style="top:353.03px;font-size:12px;line-height:12px;color:#0000ff;left:321px;width:400px;text-align:right;">0.00</div>
<div style="top:353.03px;font-size:12px;line-height:12px;color:#0000ff;left:399px;width:400px;text-align:right;">9.00</div>
<div style="top:353.03px;font-size:12px;line-height:12px;color:#0000ff;left:477px;width:400px;text-align:right;">12.00</div>
<div style="top:353.03px;font-size:12px;line-height:12px;color:#0000ff;left:555px;width:400px;text-align:right;">12.00</div>
<div style="top:353.03px;font-size:12px;line-height:12px;color:#0000ff;left:633px;width:400px;text-align:right;">12.00</div>
<div style="top:353.03px;font-size:12px;line-height:12px;color:#0000ff;left:711px;width:400px;text-align:right;">12.00</div>
<div style="top:353.03px;font-size:12px;line-height:12px;color:#0000ff;left:796px;width:400px;text-align:right;">5.00</div>
<div style="top:353.03px;font-size:12px;line-height:12px;color:#0000ff;left:881px;width:400px;text-align:right;">12.00</div>
<div style="top:353.03px;font-size:12px;line-height:12px;color:#0000ff;left:966px;width:400px;text-align:right;">3.00</div>
<div style="top:353.03px;font-size:12px;line-height:12px;color:#000;left:1034px;width:400px;text-align:right;">95.00</div>
<div style="left:49px;top:385px;width:1505px;height:1px;background:#8ea9db;"></div>
<div style="top:371.03px;font-size:12px;line-height:12px;color:#000;left:59px;">Closings Count</div>
<div style="top:371.03px;font-size:12px;line-height:12px;color:#000;left:157.5px;">2020</div>
<div style="top:371.03px;font-size:12px;line-height:12px;color:#000;left:225.5px;">Baseline*</div>
<div style="top:371.03px;font-size:12px;line-height:12px;color:#000;left:298.5px;">0002</div>
<div style="top:371.03px;font-size:12px;line-height:12px;color:#000;left:360.5px;">0107-1</div>
<div style="top:371.03px;font-size:12px;line-height:12px;color:#0000ff;left:87px;width:400px;text-align:right;">5.00</div>
<div style="top:371.03px;font-size:12px;line-height:12px;color:#0000ff;left:165px;width:400px;text-align:right;">6.00</div>
<div style="top:371.03px;font-size:12px;line-height:12px;color:#0000ff;left:243px;width:400px;text-align:right;">7.00</div>
<div style="top:371.03px;font-size:12px;line-height:12px;color:#0000ff;left:321px;width:400px;text-align:right;">0.00</div>
<div style="top:371.03px;font-size:12px;line-height:12px;color:#0000ff;left:399px;width:400px;text-align:right;">7.00</div>
<div style="top:371.03px;font-size:12px;line-height:12px;color:#0000ff;left:477px;width:400px;text-align:right;">7.00</div>
<div style="top:371.03px;font-size:12px;line-height:12px;color:#0000ff;left:555px;width:400px;text-align:right;">6.00</div>
<div style="top:371.03px;font-size:12px;line-height:12px;color:#0000ff;left:633px;width:400px;text-align:right;">6.00</div>
<div style="top:371.03px;font-size:12px;line-height:12px;color:#0000ff;left:711px;width:400px;text-align:right;">6.00</div>
<div style="top:371.03px;font-size:12px;line-height:12px;color:#0000ff;left:796px;width:400px;text-align:right;">6.00</div>
<div style="top:371.03px;font-size:12px;line-height:12px;color:#0000ff;left:881px;width:400px;text-align:right;">6.00</div>
<div style="top:371.03px;font-size:12px;line-height:12px;color:#0000ff;left:966px;width:400px;text-align:right;">6.00</div>
<div style="top:371.03px;font-size:12px;line-height:12px;color:#000;left:1034px;width:400px;text-align:right;">68.00</div>
<div style="left:49px;top:386px;width:1505px;height:17px;background:#d9e1f2;"></div>
<div style="left:49px;top:403px;width:1505px;height:1px;background:#8ea9db;"></div>
<div style="top:389.03px;font-size:12px;line-height:12px;color:#000;left:59px;">Closings Count</div>
<div style="top:389.03px;font-size:12px;line-height:12px;color:#000;left:157.5px;">2020</div>
<div style="top:389.03px;font-size:12px;line-height:12px;color:#000;left:225.5px;">Baseline*</div>
<div style="top:389.03px;font-size:12px;line-height:12px;color:#000;left:298.5px;">0003</div>
<div style="top:389.03px;font-size:12px;line-height:12px;color:#000;left:360.5px;">0301-1</div>
<div style="top:389.03px;font-size:12px;line-height:12px;color:#0000ff;left:87px;width:400px;text-align:right;">3.00</div>
<div style="top:389.03px;font-size:12px;line-height:12px;color:#0000ff;left:165px;width:400px;text-align:right;">4.00</div>
<div style="top:389.03px;font-size:12px;line-height:12px;color:#0000ff;left:243px;width:400px;text-align:right;">4.00</div>
<div style="top:389.03px;font-size:12px;line-height:12px;color:#0000ff;left:321px;width:400px;text-align:right;">4.00</div>
<div style="top:389.03px;font-size:12px;line-height:12px;color:#0000ff;left:399px;width:400px;text-align:right;">5.00</div>
<div style="top:389.03px;font-size:12px;line-height:12px;color:#0000ff;left:477px;width:400px;text-align:right;">5.00</div>
<div style="top:389.03px;font-size:12px;line-height:12px;color:#0000ff;left:555px;width:400px;text-align:right;">3.00</div>
<div style="top:389.03px;font-size:12px;line-height:12px;color:#0000ff;left:633px;width:400px;text-align:right;">3.00</div>
<div style="top:389.03px;font-size:12px;line-height:12px;color:#0000ff;left:711px;width:400px;text-align:right;">3.00</div>
<div style="top:389.03px;font-size:12px;line-height:12px;color:#0000ff;left:796px;width:400px;text-align:right;">4.00</div>
<div style="top:389.03px;font-size:12px;line-height:12px;color:#0000ff;left:881px;width:400px;text-align:right;">4.00</div>
<div style="top:389.03px;font-size:12px;line-height:12px;color:#0000ff;left:966px;width:400px;text-align:right;">1.00</div>
<div style="top:389.03px;font-size:12px;line-height:12px;color:#000;left:1034px;width:400px;text-align:right;">43.00</div>
<div style="left:49px;top:421px;width:1505px;height:1px;background:#8ea9db;"></div>
<div style="top:407.03px;font-size:12px;line-height:12px;color:#000;left:59px;">Closings Count</div>
<div style="top:407.03px;font-size:12px;line-height:12px;color:#000;left:157.5px;">2020</div>
<div style="top:407.03px;font-size:12px;line-height:12px;color:#000;left:225.5px;">Baseline*</div>
<div style="top:407.03px;font-size:12px;line-height:12px;color:#000;left:298.5px;">0003</div>
<div style="top:407.03px;font-size:12px;line-height:12px;color:#000;left:360.5px;">0304-1</div>
<div style="top:407.03px;font-size:12px;line-height:12px;color:#0000ff;left:87px;width:400px;text-align:right;">7.00</div>
<div style="top:407.03px;font-size:12px;line-height:12px;color:#0000ff;left:165px;width:400px;text-align:right;">7.00</div>
<div style="top:407.03px;font-size:12px;line-height:12px;color:#0000ff;left:243px;width:400px;text-align:right;">8.00</div>
<div style="top:407.03px;font-size:12px;line-height:12px;color:#0000ff;left:321px;width:400px;text-align:right;">8.00</div>
<div style="top:407.03px;font-size:12px;line-height:12px;color:#0000ff;left:399px;width:400px;text-align:right;">8.00</div>
<div style="top:407.03px;font-size:12px;line-height:12px;color:#0000ff;left:477px;width:400px;text-align:right;">8.00</div>
<div style="top:407.03px;font-size:12px;line-height:12px;color:#0000ff;left:555px;width:400px;text-align:right;">7.00</div>
<div style="top:407.03px;font-size:12px;line-height:12px;color:#0000ff;left:633px;width:400px;text-align:right;">7.00</div>
<div style="top:407.03px;font-size:12px;line-height:12px;color:#0000ff;left:711px;width:400px;text-align:right;">12.00</div>
<div style="top:407.03px;font-size:12px;line-height:12px;color:#0000ff;left:796px;width:400px;text-align:right;">14.00</div>
<div style="top:407.03px;font-size:12px;line-height:12px;color:#0000ff;left:881px;width:400px;text-align:right;">14.00</div>
<div style="top:407.03px;font-size:12px;line-height:12px;color:#0000ff;left:966px;width:400px;text-align:right;">16.00</div>
<div style="top:407.03px;font-size:12px;line-height:12px;color:#000;left:1034px;width:400px;text-align:right;">116.00</div>
<div style="left:49px;top:422px;width:1505px;height:17px;background:#d9e1f2;"></div>
<div style="left:49px;top:439px;width:1505px;height:1px;background:#8ea9db;"></div>
<div style="top:425.03px;font-size:12px;line-height:12px;color:#000;left:59px;">Closings Count</div>
<div style="top:425.03px;font-size:12px;line-height:12px;color:#000;left:157.5px;">2020</div>
<div style="top:425.03px;font-size:12px;line-height:12px;color:#000;left:225.5px;">Baseline*</div>
<div style="top:425.03px;font-size:12px;line-height:12px;color:#000;left:298.5px;">0003</div>
<div style="top:425.03px;font-size:12px;line-height:12px;color:#000;left:360.5px;">0401-1</div>
<div style="top:425.03px;font-size:12px;line-height:12px;color:#0000ff;left:87px;width:400px;text-align:right;">5.00</div>
<div style="top:425.03px;font-size:12px;line-height:12px;color:#0000ff;left:165px;width:400px;text-align:right;">6.00</div>
<div style="top:425.03px;font-size:12px;line-height:12px;color:#0000ff;left:243px;width:400px;text-align:right;">7.00</div>
<div style="top:425.03px;font-size:12px;line-height:12px;color:#0000ff;left:321px;width:400px;text-align:right;">0.00</div>
<div style="top:425.03px;font-size:12px;line-height:12px;color:#0000ff;left:399px;width:400px;text-align:right;">9.00</div>
<div style="top:425.03px;font-size:12px;line-height:12px;color:#0000ff;left:477px;width:400px;text-align:right;">12.00</div>
<div style="top:425.03px;font-size:12px;line-height:12px;color:#0000ff;left:555px;width:400px;text-align:right;">12.00</div>
<div style="top:425.03px;font-size:12px;line-height:12px;color:#0000ff;left:633px;width:400px;text-align:right;">12.00</div>
<div style="top:425.03px;font-size:12px;line-height:12px;color:#0000ff;left:711px;width:400px;text-align:right;">12.00</div>
<div style="top:425.03px;font-size:12px;line-height:12px;color:#0000ff;left:796px;width:400px;text-align:right;">5.00</div>
<div style="top:425.03px;font-size:12px;line-height:12px;color:#0000ff;left:881px;width:400px;text-align:right;">12.00</div>
<div style="top:425.03px;font-size:12px;line-height:12px;color:#0000ff;left:966px;width:400px;text-align:right;">3.00</div>
<div style="top:425.03px;font-size:12px;line-height:12px;color:#000;left:1034px;width:400px;text-align:right;">95.00</div>
<div style="left:49px;top:457px;width:1505px;height:1px;background:#8ea9db;"></div>
<div style="top:443.03px;font-size:12px;line-height:12px;color:#000;left:59px;">Closings Count</div>
<div style="top:443.03px;font-size:12px;line-height:12px;color:#000;left:157.5px;">2020</div>
<div style="top:443.03px;font-size:12px;line-height:12px;color:#000;left:225.5px;">Baseline*</div>
<div style="top:443.03px;font-size:12px;line-height:12px;color:#000;left:298.5px;">0003</div>
<div style="top:443.03px;font-size:12px;line-height:12px;color:#000;left:360.5px;">0402-1</div>
<div style="top:443.03px;font-size:12px;line-height:12px;color:#0000ff;left:87px;width:400px;text-align:right;">5.00</div>
<div style="top:443.03px;font-size:12px;line-height:12px;color:#0000ff;left:165px;width:400px;text-align:right;">6.00</div>
<div style="top:443.03px;font-size:12px;line-height:12px;color:#0000ff;left:243px;width:400px;text-align:right;">7.00</div>
<div style="top:443.03px;font-size:12px;line-height:12px;color:#0000ff;left:321px;width:400px;text-align:right;">0.00</div>
<div style="top:443.03px;font-size:12px;line-height:12px;color:#0000ff;left:399px;width:400px;text-align:right;">7.00</div>
<div style="top:443.03px;font-size:12px;line-height:12px;color:#0000ff;left:477px;width:400px;text-align:right;">7.00</div>
<div style="top:443.03px;font-size:12px;line-height:12px;color:#0000ff;left:555px;width:400px;text-align:right;">6.00</div>
<div style="top:443.03px;font-size:12px;line-height:12px;color:#0000ff;left:633px;width:400px;text-align:right;">6.00</div>
<div style="top:443.03px;font-size:12px;line-height:12px;color:#0000ff;left:711px;width:400px;text-align:right;">6.00</div>
<div style="top:443.03px;font-size:12px;line-height:12px;color:#0000ff;left:796px;width:400px;text-align:right;">6.00</div>
<div style="top:443.03px;font-size:12px;line-height:12px;color:#0000ff;left:881px;width:400px;text-align:right;">6.00</div>
<div style="top:443.03px;font-size:12px;line-height:12px;color:#0000ff;left:966px;width:400px;text-align:right;">6.00</div>
<div style="top:443.03px;font-size:12px;line-height:12px;color:#000;left:1034px;width:400px;text-align:right;">68.00</div>
<div style="left:49px;top:458px;width:1505px;height:17px;background:#d9e1f2;"></div>
<div style="left:49px;top:475px;width:1505px;height:1px;background:#8ea9db;"></div>
<div style="top:461.03px;font-size:12px;line-height:12px;color:#000;left:59px;">Closings Count</div>
<div style="top:461.03px;font-size:12px;line-height:12px;color:#000;left:157.5px;">2020</div>
<div style="top:461.03px;font-size:12px;line-height:12px;color:#000;left:225.5px;">Baseline*</div>
<div style="top:461.03px;font-size:12px;line-height:12px;color:#000;left:298.5px;">0004</div>
<div style="top:461.03px;font-size:12px;line-height:12px;color:#000;left:360.5px;">0301-1</div>
<div style="top:461.03px;font-size:12px;line-height:12px;color:#0000ff;left:87px;width:400px;text-align:right;">3.00</div>
<div style="top:461.03px;font-size:12px;line-height:12px;color:#0000ff;left:165px;width:400px;text-align:right;">4.00</div>
<div style="top:461.03px;font-size:12px;line-height:12px;color:#0000ff;left:243px;width:400px;text-align:right;">4.00</div>
<div style="top:461.03px;font-size:12px;line-height:12px;color:#0000ff;left:321px;width:400px;text-align:right;">4.00</div>
<div style="top:461.03px;font-size:12px;line-height:12px;color:#0000ff;left:399px;width:400px;text-align:right;">5.00</div>
<div style="top:461.03px;font-size:12px;line-height:12px;color:#0000ff;left:477px;width:400px;text-align:right;">5.00</div>
<div style="top:461.03px;font-size:12px;line-height:12px;color:#0000ff;left:555px;width:400px;text-align:right;">3.00</div>
<div style="top:461.03px;font-size:12px;line-height:12px;color:#0000ff;left:633px;width:400px;text-align:right;">3.00</div>
<div style="top:461.03px;font-size:12px;line-height:12px;color:#0000ff;left:711px;width:400px;text-align:right;">3.00</div>
<div style="top:461.03px;font-size:12px;line-height:12px;color:#0000ff;left:796px;width:400px;text-align:right;">4.00</div>
<div style="top:461.03px;font-size:12px;line-height:12px;color:#0000ff;left:881px;width:400px;text-align:right;">4.00</div>
<div style="top:461.03px;font-size:12px;line-height:12px;color:#0000ff;left:966px;width:400px;text-align:right;">1.00</div>
<div style="top:461.03px;font-size:12px;line-height:12px;color:#000;left:1034px;width:400px;text-align:right;">43.00</div>
<div style="left:49px;top:493px;width:1505px;height:1px;background:#8ea9db;"></div>
<div style="top:479.03px;font-size:12px;line-height:12px;color:#000;left:59px;">Closings Count</div>
<div style="top:479.03px;font-size:12px;line-height:12px;color:#000;left:157.5px;">2020</div>
<div style="top:479.03px;font-size:12px;line-height:12px;color:#000;left:225.5px;">Baseline*</div>
<div style="top:479.03px;font-size:12px;line-height:12px;color:#000;left:298.5px;">0004</div>
<div style="top:479.03px;font-size:12px;line-height:12px;color:#000;left:360.5px;">0401-1</div>
<div style="top:479.03px;font-size:12px;line-height:12px;color:#0000ff;left:87px;width:400px;text-align:right;">7.00</div>
<div style="top:479.03px;font-size:12px;line-height:12px;color:#0000ff;left:165px;width:400px;text-align:right;">7.00</div>
<div style="top:479.03px;font-size:12px;line-height:12px;color:#0000ff;left:243px;width:400px;text-align:right;">8.00</div>
<div style="top:479.03px;font-size:12px;line-height:12px;color:#0000ff;left:321px;width:400px;text-align:right;">8.00</div>
<div style="top:479.03px;font-size:12px;line-height:12px;color:#0000ff;left:399px;width:400px;text-align:right;">8.00</div>
<div style="top:479.03px;font-size:12px;line-height:12px;color:#0000ff;left:477px;width:400px;text-align:right;">8.00</div>
<div style="top:479.03px;font-size:12px;line-height:12px;color:#0000ff;left:555px;width:400px;text-align:right;">7.00</div>
<div style="top:479.03px;font-size:12px;line-height:12px;color:#0000ff;left:633px;width:400px;text-align:right;">7.00</div>
<div style="top:479.03px;font-size:12px;line-height:12px;color:#0000ff;left:711px;width:400px;text-align:right;">12.00</div>
<div style="top:479.03px;font-size:12px;line-height:12px;color:#0000ff;left:796px;width:400px;text-align:right;">14.00</div>
<div style="top:479.03px;font-size:12px;line-height:12px;color:#0000ff;left:881px;width:400px;text-align:right;">14.00</div>
<div style="top:479.03px;font-size:12px;line-height:12px;color:#0000ff;left:966px;width:400px;text-align:right;">16.00</div>
<div style="top:479.03px;font-size:12px;line-height:12px;color:#000;left:1034px;width:400px;text-align:right;">116.00</div>
<div style="left:49px;top:494px;width:1505px;height:17px;background:#d9e1f2;"></div>
<div style="left:49px;top:511px;width:1505px;height:1px;background:#8ea9db;"></div>
<div style="top:497.03px;font-size:12px;line-height:12px;color:#000;left:59px;">Closings Count</div>
<div style="top:497.03px;font-size:12px;line-height:12px;color:#000;left:157.5px;">2020</div>
<div style="top:497.03px;font-size:12px;line-height:12px;color:#000;left:225.5px;">Baseline*</div>
<div style="top:497.03px;font-size:12px;line-height:12px;color:#000;left:298.5px;">0004</div>
<div style="top:497.03px;font-size:12px;line-height:12px;color:#000;left:360.5px;">0402-1</div>
<div style="top:497.03px;font-size:12px;line-height:12px;color:#0000ff;left:87px;width:400px;text-align:right;">5.00</div>
<div style="top:497.03px;font-size:12px;line-height:12px;color:#0000ff;left:165px;width:400px;text-align:right;">6.00</div>
<div style="top:497.03px;font-size:12px;line-height:12px;color:#0000ff;left:243px;width:400px;text-align:right;">7.00</div>
<div style="top:497.03px;font-size:12px;line-height:12px;color:#0000ff;left:321px;width:400px;text-align:right;">0.00</div>
<div style="top:497.03px;font-size:12px;line-height:12px;color:#0000ff;left:399px;width:400px;text-align:right;">9.00</div>
<div style="top:497.03px;font-size:12px;line-height:12px;color:#0000ff;left:477px;width:400px;text-align:right;">12.00</div>
<div style="top:497.03px;font-size:12px;line-height:12px;color:#0000ff;left:555px;width:400px;text-align:right;">12.00</div>
<div style="top:497.03px;font-size:12px;line-height:12px;color:#0000ff;left:633px;width:400px;text-align:right;">12.00</div>
<div style="top:497.03px;font-size:12px;line-height:12px;color:#0000ff;left:711px;width:400px;text-align:right;">12.00</div>
<div style="top:497.03px;font-size:12px;line-height:12px;color:#0000ff;left:796px;width:400px;text-align:right;">5.00</div>
<div style="top:497.03px;font-size:12px;line-height:12px;color:#0000ff;left:881px;width:400px;text-align:right;">12.00</div>
<div style="top:497.03px;font-size:12px;line-height:12px;color:#0000ff;left:966px;width:400px;text-align:right;">3.00</div>
<div style="top:497.03px;font-size:12px;line-height:12px;color:#000;left:1034px;width:400px;text-align:right;">95.00</div>
<div style="left:49px;top:529px;width:1505px;height:1px;background:#8ea9db;"></div>
<div style="top:515.03px;font-size:12px;line-height:12px;color:#000;left:59px;">Closings Count</div>
<div style="top:515.03px;font-size:12px;line-height:12px;color:#000;left:157.5px;">2020</div>
<div style="top:515.03px;font-size:12px;line-height:12px;color:#000;left:225.5px;">Baseline*</div>
<div style="top:515.03px;font-size:12px;line-height:12px;color:#000;left:298.5px;">0005</div>
<div style="top:515.03px;font-size:12px;line-height:12px;color:#000;left:360.5px;">0103-1</div>
<div style="top:515.03px;font-size:12px;line-height:12px;color:#0000ff;left:87px;width:400px;text-align:right;">5.00</div>
<div style="top:515.03px;font-size:12px;line-height:12px;color:#0000ff;left:165px;width:400px;text-align:right;">6.00</div>
<div style="top:515.03px;font-size:12px;line-height:12px;color:#0000ff;left:243px;width:400px;text-align:right;">7.00</div>
<div style="top:515.03px;font-size:12px;line-height:12px;color:#0000ff;left:321px;width:400px;text-align:right;">0.00</div>
<div style="top:515.03px;font-size:12px;line-height:12px;color:#0000ff;left:399px;width:400px;text-align:right;">7.00</div>
<div style="top:515.03px;font-size:12px;line-height:12px;color:#0000ff;left:477px;width:400px;text-align:right;">7.00</div>
<div style="top:515.03px;font-size:12px;line-height:12px;color:#0000ff;left:555px;width:400px;text-align:right;">6.00</div>
<div style="top:515.03px;font-size:12px;line-height:12px;color:#0000ff;left:633px;width:400px;text-align:right;">6.00</div>
<div style="top:515.03px;font-size:12px;line-height:12px;color:#0000ff;left:711px;width:400px;text-align:right;">6.00</div>
<div style="top:515.03px;font-size:12px;line-height:12px;color:#0000ff;left:796px;width:400px;text-align:right;">6.00</div>
<div style="top:515.03px;font-size:12px;line-height:12px;color:#0000ff;left:881px;width:400px;text-align:right;">6.00</div>
<div style="top:515.03px;font-size:12px;line-height:12px;color:#0000ff;left:966px;width:400px;text-align:right;">6.00</div>
<div style="top:515.03px;font-size:12px;line-height:12px;color:#000;left:1034px;width:400px;text-align:right;">68.00</div>
<div style="left:49px;top:530px;width:1505px;height:17px;background:#d9e1f2;"></div>
<div style="left:49px;top:547px;width:1505px;height:1px;background:#8ea9db;"></div>
<div style="top:533.03px;font-size:12px;line-height:12px;color:#000;left:59px;">Closings Count</div>
<div style="top:533.03px;font-size:12px;line-height:12px;color:#000;left:157.5px;">2020</div>
<div style="top:533.03px;font-size:12px;line-height:12px;color:#000;left:225.5px;">Baseline*</div>
<div style="top:533.03px;font-size:12px;line-height:12px;color:#000;left:298.5px;">0008</div>
<div style="top:533.03px;font-size:12px;line-height:12px;color:#000;left:360.5px;">0101-1</div>
<div style="top:533.03px;font-size:12px;line-height:12px;color:#0000ff;left:87px;width:400px;text-align:right;">3.00</div>
<div style="top:533.03px;font-size:12px;line-height:12px;color:#0000ff;left:165px;width:400px;text-align:right;">4.00</div>
<div style="top:533.03px;font-size:12px;line-height:12px;color:#0000ff;left:243px;width:400px;text-align:right;">4.00</div>
<div style="top:533.03px;font-size:12px;line-height:12px;color:#0000ff;left:321px;width:400px;text-align:right;">4.00</div>
<div style="top:533.03px;font-size:12px;line-height:12px;color:#0000ff;left:399px;width:400px;text-align:right;">5.00</div>
<div style="top:533.03px;font-size:12px;line-height:12px;color:#0000ff;left:477px;width:400px;text-align:right;">5.00</div>
<div style="top:533.03px;font-size:12px;line-height:12px;color:#0000ff;left:555px;width:400px;text-align:right;">3.00</div>
<div style="top:533.03px;font-size:12px;line-height:12px;color:#0000ff;left:633px;width:400px;text-align:right;">3.00</div>
<div style="top:533.03px;font-size:12px;line-height:12px;color:#0000ff;left:711px;width:400px;text-align:right;">3.00</div>
<div style="top:533.03px;font-size:12px;line-height:12px;color:#0000ff;left:796px;width:400px;text-align:right;">4.00</div>
<div style="top:533.03px;font-size:12px;line-height:12px;color:#0000ff;left:881px;width:400px;text-align:right;">4.00</div>
<div style="top:533.03px;font-size:12px;line-height:12px;color:#0000ff;left:966px;width:400px;text-align:right;">1.00</div>
<div style="top:533.03px;font-size:12px;line-height:12px;color:#000;left:1034px;width:400px;text-align:right;">43.00</div>
<div style="left:49px;top:565px;width:1505px;height:1px;background:#8ea9db;"></div>
<div style="top:551.03px;font-size:12px;line-height:12px;color:#000;left:59px;">Closings Count</div>
<div style="top:551.03px;font-size:12px;line-height:12px;color:#000;left:157.5px;">2020</div>
<div style="top:551.03px;font-size:12px;line-height:12px;color:#000;left:225.5px;">Baseline*</div>
<div style="top:551.03px;font-size:12px;line-height:12px;color:#000;left:298.5px;">0009</div>
<div style="top:551.03px;font-size:12px;line-height:12px;color:#000;left:360.5px;">8152-2</div>
<div style="top:551.03px;font-size:12px;line-height:12px;color:#0000ff;left:87px;width:400px;text-align:right;">7.00</div>
<div style="top:551.03px;font-size:12px;line-height:12px;color:#0000ff;left:165px;width:400px;text-align:right;">7.00</div>
<div style="top:551.03px;font-size:12px;line-height:12px;color:#0000ff;left:243px;width:400px;text-align:right;">8.00</div>
<div style="top:551.03px;font-size:12px;line-height:12px;color:#0000ff;left:321px;width:400px;text-align:right;">8.00</div>
<div style="top:551.03px;font-size:12px;line-height:12px;color:#0000ff;left:399px;width:400px;text-align:right;">8.00</div>
<div style="top:551.03px;font-size:12px;line-height:12px;color:#0000ff;left:477px;width:400px;text-align:right;">8.00</div>
<div style="top:551.03px;font-size:12px;line-height:12px;color:#0000ff;left:555px;width:400px;text-align:right;">7.00</div>
<div style="top:551.03px;font-size:12px;line-height:12px;color:#0000ff;left:633px;width:400px;text-align:right;">7.00</div>
<div style="top:551.03px;font-size:12px;line-height:12px;color:#0000ff;left:711px;width:400px;text-align:right;">12.00</div>
<div style="top:551.03px;font-size:12px;line-height:12px;color:#0000ff;left:796px;width:400px;text-align:right;">14.00</div>
<div style="top:551.03px;font-size:12px;line-height:12px;color:#0000ff;left:881px;width:400px;text-align:right;">14.00</div>
<div style="top:551.03px;font-size:12px;line-height:12px;color:#0000ff;left:966px;width:400px;text-align:right;">16.00</div>
<div style="top:551.03px;font-size:12px;line-height:12px;color:#000;left:1034px;width:400px;text-align:right;">116.00</div>
<div style="left:47px;top:302px;width:1507px;height:2px;background:#000;"></div>
<div style="left:47px;top:565px;width:1507px;height:2px;background:#000;"></div>
<div style="left:49px;top:348px;width:1505px;height:2px;background:#000;"></div>
<div style="left:47px;top:302px;width:2px;height:265px;background:#000;"></div>
<div style="left:286px;top:302px;width:2px;height:265px;background:#000;"></div>
<div style="left:418px;top:302px;width:2px;height:265px;background:#000;"></div>
<div style="left:1375px;top:302px;width:2px;height:265px;background:#000;"></div>
<div style="left:1443px;top:302px;width:2px;height:265px;background:#000;"></div>
<div style="top:335.03px;font-size:12px;line-height:12px;color:#ffffff;font-weight:bold;left:59px;letter-spacing:-0.5px;">Category</div>
<div style="top:317.03px;font-size:12px;line-height:12px;color:#ffffff;font-weight:bold;left:157.5px;letter-spacing:-0.5px;">Budget</div>
<div style="top:335.03px;font-size:12px;line-height:12px;color:#ffffff;font-weight:bold;left:157.5px;letter-spacing:-0.5px;">Year</div>
<div style="top:335.03px;font-size:12px;line-height:12px;color:#ffffff;font-weight:bold;left:225.5px;letter-spacing:-0.5px;">Version</div>
<div style="top:335.03px;font-size:12px;line-height:12px;color:#ffffff;font-weight:bold;left:298.5px;letter-spacing:-0.5px;">Ounit</div>
<div style="top:335.03px;font-size:12px;line-height:12px;color:#ffffff;font-weight:bold;left:360.5px;letter-spacing:-0.5px;">Project</div>
<div style="left:129px;top:331px;width:15px;height:15px;border:1px solid #b4b4b4;background:linear-gradient(#ffffff,#e6e6e6)"></div>
<svg style="left:133px;top:338px;" width="9" height="5" viewBox="0 0 9 5"><path d="M0.5 0.5h7.5l-3.75 4z" fill="#555"/></svg>
<div style="left:196px;top:331px;width:15px;height:15px;border:1px solid #b4b4b4;background:linear-gradient(#ffffff,#e6e6e6)"></div>
<svg style="left:200px;top:338px;" width="9" height="5" viewBox="0 0 9 5"><path d="M0.5 0.5h7.5l-3.75 4z" fill="#555"/></svg>
<div style="left:270px;top:331px;width:15px;height:15px;border:1px solid #b4b4b4;background:linear-gradient(#ffffff,#e6e6e6)"></div>
<svg style="left:274px;top:338px;" width="9" height="5" viewBox="0 0 9 5"><path d="M0.5 0.5h7.5l-3.75 4z" fill="#555"/></svg>
<div style="left:332px;top:331px;width:15px;height:15px;border:1px solid #b4b4b4;background:linear-gradient(#ffffff,#e6e6e6)"></div>
<svg style="left:336px;top:338px;" width="9" height="5" viewBox="0 0 9 5"><path d="M0.5 0.5h7.5l-3.75 4z" fill="#555"/></svg>
<div style="left:402px;top:331px;width:15px;height:15px;border:1px solid #b4b4b4;background:linear-gradient(#ffffff,#e6e6e6)"></div>
<svg style="left:406px;top:338px;" width="9" height="5" viewBox="0 0 9 5"><path d="M0.5 0.5h7.5l-3.75 4z" fill="#555"/></svg>
<div style="left:480px;top:331px;width:15px;height:15px;border:1px solid #b4b4b4;background:linear-gradient(#ffffff,#e6e6e6)"></div>
<svg style="left:484px;top:338px;" width="9" height="5" viewBox="0 0 9 5"><path d="M0.5 0.5h7.5l-3.75 4z" fill="#555"/></svg>
<div style="top:335.03px;font-size:12px;line-height:12px;color:#ffffff;font-weight:bold;left:76px;width:400px;text-align:right;">Month 1</div>
<div style="left:558px;top:331px;width:15px;height:15px;border:1px solid #b4b4b4;background:linear-gradient(#ffffff,#e6e6e6)"></div>
<svg style="left:562px;top:338px;" width="9" height="5" viewBox="0 0 9 5"><path d="M0.5 0.5h7.5l-3.75 4z" fill="#555"/></svg>
<div style="top:335.03px;font-size:12px;line-height:12px;color:#ffffff;font-weight:bold;left:154px;width:400px;text-align:right;">Month 2</div>
<div style="left:636px;top:331px;width:15px;height:15px;border:1px solid #b4b4b4;background:linear-gradient(#ffffff,#e6e6e6)"></div>
<svg style="left:640px;top:338px;" width="9" height="5" viewBox="0 0 9 5"><path d="M0.5 0.5h7.5l-3.75 4z" fill="#555"/></svg>
<div style="top:335.03px;font-size:12px;line-height:12px;color:#ffffff;font-weight:bold;left:232px;width:400px;text-align:right;">Month 3</div>
<div style="left:714px;top:331px;width:15px;height:15px;border:1px solid #b4b4b4;background:linear-gradient(#ffffff,#e6e6e6)"></div>
<svg style="left:718px;top:338px;" width="9" height="5" viewBox="0 0 9 5"><path d="M0.5 0.5h7.5l-3.75 4z" fill="#555"/></svg>
<div style="top:335.03px;font-size:12px;line-height:12px;color:#ffffff;font-weight:bold;left:310px;width:400px;text-align:right;">Month 4</div>
<div style="left:792px;top:331px;width:15px;height:15px;border:1px solid #b4b4b4;background:linear-gradient(#ffffff,#e6e6e6)"></div>
<svg style="left:796px;top:338px;" width="9" height="5" viewBox="0 0 9 5"><path d="M0.5 0.5h7.5l-3.75 4z" fill="#555"/></svg>
<div style="top:335.03px;font-size:12px;line-height:12px;color:#ffffff;font-weight:bold;left:388px;width:400px;text-align:right;">Month 5</div>
<div style="left:870px;top:331px;width:15px;height:15px;border:1px solid #b4b4b4;background:linear-gradient(#ffffff,#e6e6e6)"></div>
<svg style="left:874px;top:338px;" width="9" height="5" viewBox="0 0 9 5"><path d="M0.5 0.5h7.5l-3.75 4z" fill="#555"/></svg>
<div style="top:335.03px;font-size:12px;line-height:12px;color:#ffffff;font-weight:bold;left:466px;width:400px;text-align:right;">Month 6</div>
<div style="left:948px;top:331px;width:15px;height:15px;border:1px solid #b4b4b4;background:linear-gradient(#ffffff,#e6e6e6)"></div>
<svg style="left:952px;top:338px;" width="9" height="5" viewBox="0 0 9 5"><path d="M0.5 0.5h7.5l-3.75 4z" fill="#555"/></svg>
<div style="top:335.03px;font-size:12px;line-height:12px;color:#ffffff;font-weight:bold;left:544px;width:400px;text-align:right;">Month 7</div>
<div style="left:1026px;top:331px;width:15px;height:15px;border:1px solid #b4b4b4;background:linear-gradient(#ffffff,#e6e6e6)"></div>
<svg style="left:1030px;top:338px;" width="9" height="5" viewBox="0 0 9 5"><path d="M0.5 0.5h7.5l-3.75 4z" fill="#555"/></svg>
<div style="top:335.03px;font-size:12px;line-height:12px;color:#ffffff;font-weight:bold;left:622px;width:400px;text-align:right;">Month 8</div>
<div style="left:1104px;top:331px;width:15px;height:15px;border:1px solid #b4b4b4;background:linear-gradient(#ffffff,#e6e6e6)"></div>
<svg style="left:1108px;top:338px;" width="9" height="5" viewBox="0 0 9 5"><path d="M0.5 0.5h7.5l-3.75 4z" fill="#555"/></svg>
<div style="top:335.03px;font-size:12px;line-height:12px;color:#ffffff;font-weight:bold;left:700px;width:400px;text-align:right;">Month 9</div>
<div style="left:1189px;top:331px;width:15px;height:15px;border:1px solid #b4b4b4;background:linear-gradient(#ffffff,#e6e6e6)"></div>
<svg style="left:1193px;top:338px;" width="9" height="5" viewBox="0 0 9 5"><path d="M0.5 0.5h7.5l-3.75 4z" fill="#555"/></svg>
<div style="top:335.03px;font-size:12px;line-height:12px;color:#ffffff;font-weight:bold;left:785px;width:400px;text-align:right;">Month 10</div>
<div style="left:1274px;top:331px;width:15px;height:15px;border:1px solid #b4b4b4;background:linear-gradient(#ffffff,#e6e6e6)"></div>
<svg style="left:1278px;top:338px;" width="9" height="5" viewBox="0 0 9 5"><path d="M0.5 0.5h7.5l-3.75 4z" fill="#555"/></svg>
<div style="top:335.03px;font-size:12px;line-height:12px;color:#ffffff;font-weight:bold;left:870px;width:400px;text-align:right;">Month 11</div>
<div style="left:1359px;top:331px;width:15px;height:15px;border:1px solid #b4b4b4;background:linear-gradient(#ffffff,#e6e6e6)"></div>
<svg style="left:1363px;top:338px;" width="9" height="5" viewBox="0 0 9 5"><path d="M0.5 0.5h7.5l-3.75 4z" fill="#555"/></svg>
<div style="top:335.03px;font-size:12px;line-height:12px;color:#ffffff;font-weight:bold;left:955px;width:400px;text-align:right;">Month 12</div>
<div style="left:1427px;top:331px;width:15px;height:15px;border:1px solid #b4b4b4;background:linear-gradient(#ffffff,#e6e6e6)"></div>
<svg style="left:1431px;top:338px;" width="9" height="5" viewBox="0 0 9 5"><path d="M0.5 0.5h7.5l-3.75 4z" fill="#555"/></svg>
<div style="top:335.03px;font-size:12px;line-height:12px;color:#ffffff;font-weight:bold;left:1379px;letter-spacing:-0.3px;">Total</div>
<div style="top:335.03px;font-size:12px;line-height:12px;color:#ffffff;font-weight:bold;left:1447.5px;letter-spacing:-0.3px;">Notes</div>
<svg style="left:0;top:0" width="1556" height="617" viewBox="0 0 1556 617"><path d="M1076.6 52.0 C1074.4 51.9 1067.8 50.9 1063.6 51.2 C1059.4 51.5 1055.2 52.5 1051.5 54.0 C1047.8 55.5 1044.7 57.6 1041.7 60.1 C1038.7 62.6 1035.9 65.7 1033.6 69.0 C1031.2 72.3 1029.0 75.7 1027.6 80.0 C1026.2 84.3 1025.5 90.1 1025.2 94.6 C1024.9 99.1 1024.8 103.5 1025.7 107.2 C1026.6 110.9 1028.2 113.9 1030.6 117.0 C1033.0 120.1 1036.4 123.5 1040.3 125.7 C1044.2 127.9 1048.4 129.1 1053.9 130.1 C1059.4 131.1 1066.9 131.4 1073.4 131.6 C1079.9 131.8 1088.0 131.6 1092.8 131.1 C1097.6 130.6 1100.1 130.2 1102.5 128.6 C1104.9 127.0 1106.2 125.0 1107.4 121.8 C1108.6 118.6 1109.2 113.7 1109.8 109.2 C1110.4 104.7 1110.8 98.9 1110.8 94.6 C1110.8 90.3 1110.9 87.4 1109.8 83.6 C1108.7 79.8 1106.4 75.2 1104.1 71.5 C1101.8 67.8 1098.7 65.1 1096.0 61.7 C1093.3 58.3 1090.3 53.6 1088.0 51.2 C1085.7 48.8 1085.7 48.4 1082.3 47.2 C1078.9 46.0 1072.4 44.9 1067.7 43.9 C1063.0 42.9 1058.2 42.0 1053.9 41.5 C1049.6 41.0 1043.7 40.9 1041.7 40.8" fill="none" stroke="#e41b1b" stroke-width="3.6" stroke-linecap="round" stroke-linejoin="round"/></svg>
<div style="left:0px;top:0px;width:1556px;height:2px;background:#5046ff;"></div>
<div style="left:0px;top:615px;width:1556px;height:2px;background:#5046ff;"></div>
<div style="left:0px;top:0px;width:2px;height:617px;background:#5046ff;"></div>
<div style="left:1554px;top:0px;width:2px;height:617px;background:#5046ff;"></div>
</body></html>
